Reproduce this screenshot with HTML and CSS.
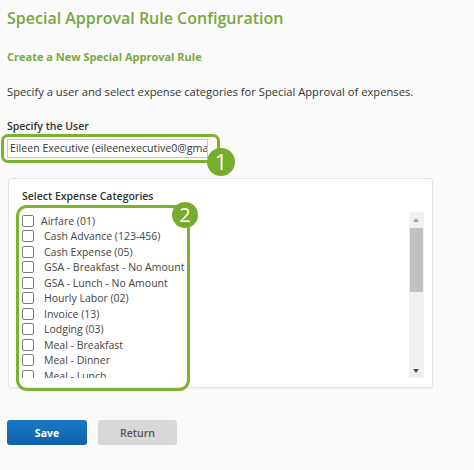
FILE: index.html
```html
<!DOCTYPE html>
<html lang="en">
<head>
<meta charset="utf-8">
<title>Special Approval Rule Configuration</title>
<link rel="stylesheet" href="styles.css">
</head>
<body>
<div class="page">
  <h1 class="title">Special Approval Rule Configuration</h1>
  <h2 class="subtitle">Create a New Special Approval Rule</h2>
  <p class="desc">Specify a user and select expense categories for Special Approval of expenses.</p>
  <div class="field">
    <div class="label">Specify the User</div>
    <div class="input-wrap">
      <div class="input">Eileen Executive (eileenexecutive0@gmail.com)</div>
      <div class="hl hl-1"></div>
      <div class="badge badge-1">1</div>
    </div>
  </div>
  <div class="panel">
    <div class="panel-label">Select Expense Categories</div>
    <div class="list-wrap">
      <ul class="list">
        <li class="item first"><span class="cb"></span><span class="txt">Airfare (01)</span></li>
        <li class="item"><span class="cb"></span><span class="txt">Cash Advance (123-456)</span></li>
        <li class="item"><span class="cb"></span><span class="txt">Cash Expense (05)</span></li>
        <li class="item"><span class="cb"></span><span class="txt">GSA - Breakfast - No Amount</span></li>
        <li class="item"><span class="cb"></span><span class="txt">GSA - Lunch - No Amount</span></li>
        <li class="item"><span class="cb"></span><span class="txt">Hourly Labor (02)</span></li>
        <li class="item"><span class="cb"></span><span class="txt">Invoice (13)</span></li>
        <li class="item"><span class="cb"></span><span class="txt">Lodging (03)</span></li>
        <li class="item"><span class="cb"></span><span class="txt">Meal - Breakfast</span></li>
        <li class="item"><span class="cb"></span><span class="txt">Meal - Dinner</span></li>
        <li class="item"><span class="cb"></span><span class="txt">Meal - Lunch</span></li>
        <li class="item"><span class="cb"></span><span class="txt">Mileage (04)</span></li>
      </ul>
      <div class="scrollbar">
        <span class="arrow up"></span>
        <span class="track"><span class="thumb"></span></span>
        <span class="arrow down"></span>
      </div>
      <div class="hl hl-2"></div>
      <div class="badge badge-2">2</div>
    </div>
  </div>
  <div class="actions">
    <button class="btn btn-save">Save</button>
    <button class="btn btn-return">Return</button>
  </div>
</div>
</body>
</html>
```
FILE: styles.css
```css
html, body {
  margin: 0;
  padding: 0;
  background: #fafafa;
}
body {
  font-family: "Open Sans", "Noto Sans", sans-serif;
  color: #333;
  width: 474px;
  height: 470px;
  overflow: hidden;
}
.page {
  padding: 6px 7px 0 7px;
}
.title {
  margin: 0;
  font-size: 16px;
  line-height: 24px;
  font-weight: 600;
  color: #78a843;
}
.subtitle {
  margin: 19px 0 0 0;
  font-size: 11px;
  line-height: 16px;
  font-weight: 700;
  color: #78a843;
}
.desc {
  margin: 19px 0 0 0;
  font-size: 11.2px;
  line-height: 16px;
}
.field {
  margin-top: 18px;
}
.label {
  font-size: 10.5px;
  line-height: 16px;
  font-weight: 600;
  color: #333;
}
.input-wrap {
  position: relative;
  margin-top: 5px;
  width: 201px;
}
.input {
  height: 19px;
  box-sizing: border-box;
  border: 1px solid #c8c8c8;
  background: #fff;
  font-size: 10.6px;
  line-height: 17px;
  padding: 0 2px;
  white-space: nowrap;
  overflow: hidden;
  color: #333;
}
.hl {
  position: absolute;
  border: 3px solid #7cb22f;
  box-sizing: border-box;
  pointer-events: none;
}
.hl-1 {
  left: -6px;
  top: -5px;
  width: 219px;
  height: 29px;
  border-radius: 7px;
}
.badge {
  position: absolute;
  border-radius: 50%;
  background: #76ad2e;
  color: #fff;
  font-family: "Open Sans", sans-serif;
  text-align: center;
  font-weight: 400;
}
.badge-1 {
  left: 200px;
  top: 9px;
  width: 28px;
  height: 28px;
  line-height: 28px;
  font-size: 21px;
}
.panel {
  margin: 20px 0 0 1px;
  width: 425px;
  height: 210px;
  box-sizing: border-box;
  background: #fff;
  border: 1px solid #e3e3e3;
  border-radius: 3px;
  box-shadow: 0 1px 2px rgba(0,0,0,0.06);
  padding: 9px 8px 0 13px;
}
.panel-label {
  font-size: 10.5px;
  line-height: 16px;
  font-weight: 600;
  color: #333;
}
.list-wrap {
  position: relative;
  display: flex;
  margin-top: 8px;
  height: 166px;
}
.list {
  flex: 1;
  list-style: none;
  margin: 0;
  padding: 1px 0 0 0;
  height: 166px;
  box-sizing: border-box;
  overflow: hidden;
}
.item {
  display: flex;
  align-items: center;
  height: 15.5px;
  font-size: 10.5px;
  color: #444;
}
.cb {
  width: 12px;
  height: 12px;
  box-sizing: border-box;
  border: 1px solid #7a7a7a;
  border-radius: 2px;
  background: #fff;
  flex: none;
}
.txt {
  margin-left: 10px;
  white-space: nowrap;
}
.item.first .txt {
  margin-left: 7px;
}
.scrollbar {
  width: 15px;
  flex: none;
  display: flex;
  flex-direction: column;
  background: #f1f1f1;
}
.arrow {
  height: 16px;
  position: relative;
  flex: none;
}
.arrow::after {
  content: "";
  position: absolute;
  left: 4px;
  width: 0;
  height: 0;
  border-left: 3.5px solid transparent;
  border-right: 3.5px solid transparent;
}
.arrow.up::after {
  top: 6px;
  border-bottom: 4px solid #a3a3a3;
}
.arrow.down::after {
  top: 7px;
  border-top: 4px solid #505050;
}
.track {
  flex: 1;
  position: relative;
}
.thumb {
  position: absolute;
  left: 1px;
  right: 1px;
  top: 0;
  height: 64px;
  background: #c1c1c1;
}
.hl-2 {
  left: -6px;
  top: -7px;
  width: 174px;
  height: 186px;
  border-radius: 11px;
}
.badge-2 {
  left: 150px;
  top: -10px;
  width: 26px;
  height: 26px;
  line-height: 26px;
  font-size: 20px;
}
.actions {
  display: flex;
  gap: 11px;
  margin-top: 32px;
}
.btn {
  width: 80px;
  height: 25px;
  border: none;
  border-radius: 3px;
  font-family: "Open Sans", sans-serif;
  font-size: 10.5px;
  padding: 0;
}
.btn-save {
  background: linear-gradient(#1b78c4, #0d62a8);
  color: #fff;
  font-weight: 700;
}
.btn-return {
  width: 79px;
  background: #d8d8d8;
  color: #555;
  font-weight: 600;
}
```
